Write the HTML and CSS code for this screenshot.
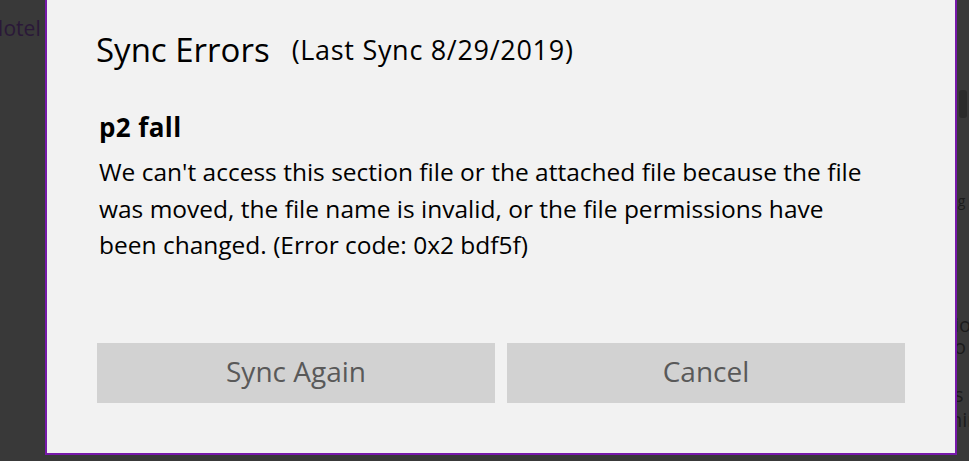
FILE: index.html
```html
<!DOCTYPE html>
<html lang="en">
<head>
<meta charset="utf-8">
<title>Sync Errors</title>
<link rel="stylesheet" href="styles.css">
</head>
<body>
<div class="page">
  <div class="page-left">
    <span class="page-title">Hotel</span>
  </div>
  <div class="page-right">
    <div class="scroll-thumb"></div>
    <div class="bg-line bg-g">.g</div>
    <div class="bg-line bg-io">io</div>
    <div class="bg-line bg-o">o</div>
    <div class="bg-line bg-s">s</div>
    <div class="bg-line bg-hir">hir</div>
  </div>
</div>

<div class="dialog" role="dialog" aria-labelledby="dlg-title">
  <div class="dialog-header">
    <h1 class="dialog-title" id="dlg-title">Sync Errors</h1>
    <span class="dialog-sub">(Last Sync 8/29/2019)</span>
  </div>
  <div class="error">
    <h2 class="error-name">p2 fall</h2>
    <p class="error-text">We can't access this section file or the attached file because the file was moved, the file name is invalid, or the file permissions have been changed. (Error code: 0x2 bdf5f)</p>
  </div>
  <div class="dialog-actions">
    <button class="btn">Sync Again</button>
    <button class="btn">Cancel</button>
  </div>
</div>
</body>
</html>
```
FILE: styles.css
```css
html, body {
  margin: 0;
  padding: 0;
  height: 100%;
  overflow: hidden;
}
body {
  background: #393939;
  font-family: "Open Sans", "Noto Sans", sans-serif;
  position: relative;
}
.page {
  display: flex;
  height: 100%;
}
.page-left {
  width: 60px;
  padding-top: 13px;
}
.page-title {
  display: block;
  margin-left: -12px;
  font-size: 21px;
  color: #2a1838;
  line-height: 30px;
}
.page-right {
  margin-left: auto;
  width: 12px;
  display: flex;
  flex-direction: column;
  font-size: 20px;
  color: #1c1c1c;
  line-height: 22px;
}
.scroll-thumb {
  margin-top: 90px;
  margin-left: 2px;
  width: 8px;
  height: 28px;
  border-radius: 3px;
  background: #2b2b2b;
}
.bg-line { white-space: nowrap; margin-left: -3px; }
.bg-g { margin-top: 72px; font-size: 14px; }
.bg-io { margin-top: 102px; }
.bg-o { margin-top: 0; }
.bg-s { margin-top: 26px; }
.bg-hir { margin-top: 3px; margin-left: -7px; }

.dialog {
  position: absolute;
  left: 45px;
  top: 0;
  width: 808px;
  height: 453px;
  box-sizing: content-box;
  padding: 0 50px;
  background: #f2f2f2;
  border: 2px solid #7719aa;
  border-top: 0;
  display: flex;
  flex-direction: column;
  color: #000;
}
.dialog-header {
  display: flex;
  align-items: flex-start;
  gap: 22px;
  padding-top: 28px;
}
.dialog-title {
  margin: 0 0 0 -1px;
  font-weight: 400;
  font-size: 33px;
  line-height: 44px;
}
.dialog-sub {
  margin-top: 4px;
  font-size: 27px;
  line-height: 36px;
  letter-spacing: 0.7px;
}
.error {
  padding-top: 38px;
  padding-left: 2px;
}
.error-name {
  margin: 0;
  font-size: 26px;
  font-weight: 700;
  line-height: 34px;
  letter-spacing: 0.4px;
}
.error-text {
  margin: 10px 0 0;
  font-size: 24.5px;
  line-height: 36.5px;
  max-width: 772px;
}
.dialog-actions {
  margin-top: auto;
  margin-bottom: 50px;
  display: flex;
  gap: 12px;
}
.btn {
  flex: 1;
  height: 60px;
  border: 0;
  background: #d2d2d2;
  color: #595959;
  font-family: inherit;
  font-size: 28px;
  padding: 0 0 4px;
}
```
